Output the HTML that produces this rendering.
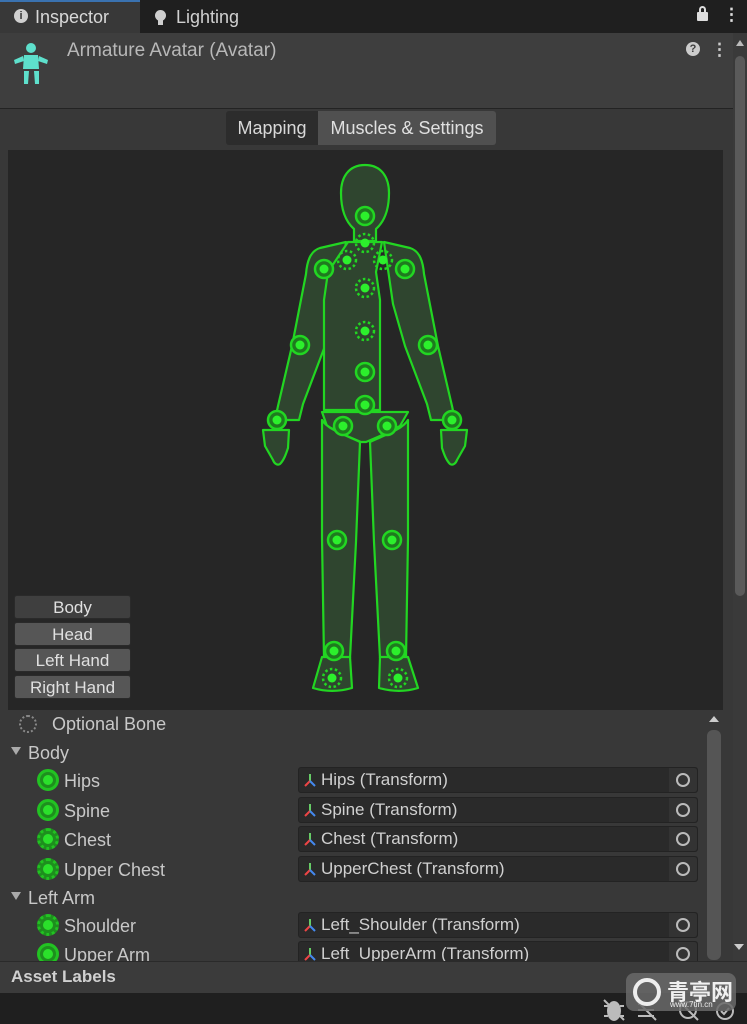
<!DOCTYPE html>
<html><head><meta charset="utf-8"><style>
*{margin:0;padding:0;box-sizing:border-box}
body{width:747px;height:1024px;background:#383838;font-family:"Liberation Sans",sans-serif;color:#c4c4c4;position:relative;overflow:hidden}
.a{position:absolute}
.t{font-size:17px;white-space:nowrap}
.btn{position:absolute;left:14px;width:117px;height:24px;border-radius:3px;background:#565656;color:#e0e0e0;font-size:17px;text-align:center;line-height:24px;border:1px solid #2a2a2a}
.field{position:absolute;left:298px;width:400px;height:26px;background:#2a2a2a;border-radius:3px;border:1px solid #232323;overflow:hidden}
.field span{position:absolute;left:22px;top:2px;font-size:17px;color:#d0d0d0}
.field i{position:absolute;right:0;top:0;width:28px;height:24px;background:#333;border-radius:0 3px 3px 0}
.field i:after{content:"";position:absolute;left:7px;top:5px;width:10px;height:10px;border:2px solid #bbb;border-radius:50%}
.lbl{position:absolute;left:64px;font-size:18px;color:#c8c8c8}
.jt{position:absolute;left:37px;width:22px;height:22px;border-radius:50%;border:3px solid #22c222;background:#1e8e1e}
.jt:after{content:"";position:absolute;left:3px;top:3px;width:10px;height:10px;border-radius:50%;background:#2be02b}
.jd{border-style:dotted}
</style></head><body>
<div class="a" style="left:0;top:0;width:747px;height:33px;background:#1f1f1f"></div>
<div class="a" style="left:0;top:0;width:140px;height:33px;background:#383838;border-top:2px solid #3a72b0"></div>
<div class="a" style="left:14px;top:9px;width:14px;height:14px;border-radius:50%;background:#d0d0d0;color:#383838;font-size:11px;font-weight:bold;text-align:center;line-height:14px">i</div>
<div class="a t" style="left:35px;top:7px;color:#d8d8d8;font-size:18px">Inspector</div>
<div class="a" style="left:155px;top:10px;width:11px;height:11px;border-radius:50%;background:#cfcfcf"></div>
<div class="a" style="left:158px;top:20px;width:5px;height:5px;background:#cfcfcf"></div>
<div class="a t" style="left:176px;top:7px;color:#d0d0d0;font-size:18px">Lighting</div>
<div class="a" style="left:697px;top:12px;width:11px;height:9px;background:#ddd;border-radius:1px"></div>
<div class="a" style="left:699px;top:6px;width:7px;height:8px;border:2px solid #ddd;border-bottom:none;border-radius:4px 4px 0 0"></div>
<div class="a t" style="left:723px;top:5px;color:#ddd;font-weight:bold">⋮</div>
<div class="a" style="left:0;top:33px;width:733px;height:76px;background:#3e3e3e;border-bottom:1px solid #232323"></div>
<svg class="a" style="left:10px;top:40px" width="44" height="46" viewBox="0 0 44 46"><g fill="#5ee0cc"><circle cx="21" cy="8" r="5"/><path d="M14 15h14l1 14h-16z"/><path d="M13 16l-9 4 1 4 9-3z M29 16l9 4-1 4-9-3z"/><path d="M14 31h5l-1 13h-4z M24 31h5l0 13h-4z"/></g></svg>
<div class="a t" style="left:67px;top:40px;color:#b8b8b8;font-size:19px">Armature Avatar (Avatar)</div>
<div class="a" style="left:686px;top:42px;width:14px;height:14px;border-radius:50%;background:#ccc;color:#3e3e3e;font-size:11px;font-weight:bold;text-align:center;line-height:14px">?</div>
<div class="a t" style="left:711px;top:40px;color:#ccc;font-weight:bold">⋮</div>
<div class="a" style="left:733px;top:33px;width:14px;height:930px;background:#3a3a3a"></div>
<div class="a" style="left:735px;top:56px;width:10px;height:540px;background:#5a5a5a;border-radius:5px"></div>
<div class="a" style="left:736px;top:40px;width:0;height:0;border-left:4px solid transparent;border-right:4px solid transparent;border-bottom:6px solid #bbb"></div>
<div class="a" style="left:226px;top:111px;width:92px;height:34px;background:#2c2c2c;border-radius:3px 0 0 3px;color:#d8d8d8;font-size:18px;text-align:center;line-height:34px">Mapping</div>
<div class="a" style="left:318px;top:111px;width:178px;height:34px;background:#505050;border-radius:0 3px 3px 0;color:#e0e0e0;font-size:18px;text-align:center;line-height:34px">Muscles &amp; Settings</div>
<div class="a" style="left:8px;top:150px;width:715px;height:560px;background:#262626"></div>
<svg class="a" style="left:0;top:0" width="747" height="710" viewBox="0 0 747 710">
<g fill="#2f452f" stroke="#22d622" stroke-width="2.2" stroke-linejoin="round">
<path d="M365 165c-17 0-24 13-24 28 0 15 4 28 13 36l0 12h22l0-12c9-8 13-21 13-36 0-15-7-28-24-28z"/>
<path d="M346 242l-26 6c-10 3-13 14-14 26l-14 72-14 60-3 14h24l4-16 22-58 12-42z"/>
<path d="M384 242l26 6c10 3 13 14 14 26l14 72 14 60 3 14h-24l-4-16-22-58-12-42z"/>
<path d="M348 242h34l-6 30 4 28 0 110h-56l0-110 4-28z"/>
<path d="M322 412h86l-8 14-20 10-14 6-5 0-14-6-20-10z"/>
<path d="M322 420c6 10 26 16 38 22l-4 100-6 116h-26l-2-120z"/>
<path d="M408 420c-6 10-26 16-38 22l4 100 6 116h26l2-120z"/>
<path d="M263 430h26l-1 18c-2 6-4 12-8 16-3 2-6-1-7-4l-8-14z"/>
<path d="M467 430h-26l1 18c2 6 4 12 8 16 3 2 6-1 7-4l8-14z"/>
<path d="M322 657h28l2 31c-14 4-26 4-39 0z"/>
<path d="M380 657h28l10 31c-13 4-25 4-39 0z"/>
</g>
<g>
<defs><g id="j"><circle r="9" fill="#1f7a1f" stroke="#22d622" stroke-width="2.5"/><circle r="4.5" fill="#2cf02c"/></g>
<g id="d"><circle r="9" fill="none" stroke="#22d622" stroke-width="2.5" stroke-dasharray="2.5 2.5"/><circle r="4.5" fill="#2cf02c"/></g></defs>
<use href="#j" x="365" y="216"/><use href="#d" x="365" y="243"/>
<use href="#d" x="347" y="260"/><use href="#d" x="383" y="260"/>
<use href="#j" x="324" y="269"/><use href="#j" x="405" y="269"/>
<use href="#d" x="365" y="288"/><use href="#d" x="365" y="331"/>
<use href="#j" x="365" y="372"/><use href="#j" x="365" y="405"/>
<use href="#j" x="300" y="345"/><use href="#j" x="428" y="345"/>
<use href="#j" x="277" y="420"/><use href="#j" x="452" y="420"/>
<use href="#j" x="343" y="426"/><use href="#j" x="387" y="426"/>
<use href="#j" x="337" y="540"/><use href="#j" x="392" y="540"/>
<use href="#j" x="334" y="651"/><use href="#j" x="396" y="651"/>
<use href="#d" x="332" y="678"/><use href="#d" x="398" y="678"/>
</g>
</svg>
<div class="btn" style="top:595px;background:#3f3f3f">Body</div>
<div class="btn" style="top:622px">Head</div>
<div class="btn" style="top:648px">Left Hand</div>
<div class="btn" style="top:675px">Right Hand</div>
<div class="a" style="left:8px;top:710px;width:715px;height:252px;background:#383838"></div>
<div class="a" style="left:707px;top:730px;width:14px;height:230px;background:#555;border-radius:6px"></div>
<div class="a" style="left:709px;top:716px;border-left:5px solid transparent;border-right:5px solid transparent;border-bottom:6px solid #ccc"></div>
<div class="a" style="left:734px;top:944px;border-left:5px solid transparent;border-right:5px solid transparent;border-top:6px solid #ccc"></div>
<div class="a" style="left:19px;top:715px;width:18px;height:18px;border-radius:50%;border:2px dotted #888"></div>
<div class="a t" style="left:52px;top:714px;color:#c8c8c8;font-size:18px">Optional Bone</div>
<div class="a" style="left:11px;top:747px;border-left:5px solid transparent;border-right:5px solid transparent;border-top:8px solid #aaa"></div>
<div class="a t" style="left:28px;top:743px;color:#c8c8c8;font-size:18px">Body</div>
<div class="jt" style="top:769px"></div><div class="lbl" style="top:771px">Hips</div>
<div class="jt" style="top:799px"></div><div class="lbl" style="top:801px">Spine</div>
<div class="jt jd" style="top:828px"></div><div class="lbl" style="top:830px">Chest</div>
<div class="jt jd" style="top:858px"></div><div class="lbl" style="top:860px">Upper Chest</div>
<div class="a" style="left:11px;top:892px;border-left:5px solid transparent;border-right:5px solid transparent;border-top:8px solid #aaa"></div>
<div class="a t" style="left:28px;top:888px;color:#c8c8c8;font-size:18px">Left Arm</div>
<div class="jt jd" style="top:914px"></div><div class="lbl" style="top:916px">Shoulder</div>
<div class="jt" style="top:943px"></div><div class="lbl" style="top:945px">Upper Arm</div>
<div class="field" style="top:767px"><svg style="position:absolute;left:4px;top:5px" width="14" height="14"><path d="M7 1v7" stroke="#6c6" stroke-width="2"/><path d="M7 8l-5 5" stroke="#e44" stroke-width="2"/><path d="M7 8l5 5" stroke="#48e" stroke-width="2"/></svg><span>Hips (Transform)</span><i></i></div>
<div class="field" style="top:797px"><svg style="position:absolute;left:4px;top:5px" width="14" height="14"><path d="M7 1v7" stroke="#6c6" stroke-width="2"/><path d="M7 8l-5 5" stroke="#e44" stroke-width="2"/><path d="M7 8l5 5" stroke="#48e" stroke-width="2"/></svg><span>Spine (Transform)</span><i></i></div>
<div class="field" style="top:826px"><svg style="position:absolute;left:4px;top:5px" width="14" height="14"><path d="M7 1v7" stroke="#6c6" stroke-width="2"/><path d="M7 8l-5 5" stroke="#e44" stroke-width="2"/><path d="M7 8l5 5" stroke="#48e" stroke-width="2"/></svg><span>Chest (Transform)</span><i></i></div>
<div class="field" style="top:856px"><svg style="position:absolute;left:4px;top:5px" width="14" height="14"><path d="M7 1v7" stroke="#6c6" stroke-width="2"/><path d="M7 8l-5 5" stroke="#e44" stroke-width="2"/><path d="M7 8l5 5" stroke="#48e" stroke-width="2"/></svg><span>UpperChest (Transform)</span><i></i></div>
<div class="field" style="top:912px"><svg style="position:absolute;left:4px;top:5px" width="14" height="14"><path d="M7 1v7" stroke="#6c6" stroke-width="2"/><path d="M7 8l-5 5" stroke="#e44" stroke-width="2"/><path d="M7 8l5 5" stroke="#48e" stroke-width="2"/></svg><span>Left_Shoulder (Transform)</span><i></i></div>
<div class="field" style="top:941px"><svg style="position:absolute;left:4px;top:5px" width="14" height="14"><path d="M7 1v7" stroke="#6c6" stroke-width="2"/><path d="M7 8l-5 5" stroke="#e44" stroke-width="2"/><path d="M7 8l5 5" stroke="#48e" stroke-width="2"/></svg><span>Left_UpperArm (Transform)</span><i></i></div>
<div class="a" style="left:0;top:961px;width:747px;height:32px;background:#3b3b3b;border-top:1px solid #2a2a2a"></div>
<div class="a t" style="left:11px;top:967px;color:#d0d0d0;font-weight:bold;font-size:17px">Asset Labels</div>
<div class="a" style="left:0;top:993px;width:747px;height:31px;background:#1f1f1f"></div>
<svg class="a" style="left:598px;top:996px" width="149" height="28"><g stroke="#bbb" stroke-width="2" fill="none"><ellipse cx="16" cy="15" rx="6" ry="9" fill="#bbb"/><path d="M6 4l20 20M6 10h4M22 10h4M6 20h4M22 20h4"/><path d="M40 8h16M40 14h16M40 20h16M38 4l20 20"/><circle cx="90" cy="14" r="8"/><path d="M80 4l20 20"/><circle cx="127" cy="15" r="8"/><path d="M123 15l3 3 5-6"/></g></svg>
<div class="a" style="left:626px;top:973px;width:110px;height:38px;background:#6a6a6a;border-radius:8px;opacity:.85"></div>
<div class="a" style="left:633px;top:978px;width:28px;height:28px;border:4px solid #eee;border-radius:50%"></div>
<div class="a" style="left:667px;top:975px;color:#f0f0f0;font-size:22px;font-family:'Noto Sans CJK SC',sans-serif;font-weight:bold">青亭网</div>
<div class="a" style="left:670px;top:1000px;color:#eee;font-size:8px">www.7tin.cn</div>
</body></html>
